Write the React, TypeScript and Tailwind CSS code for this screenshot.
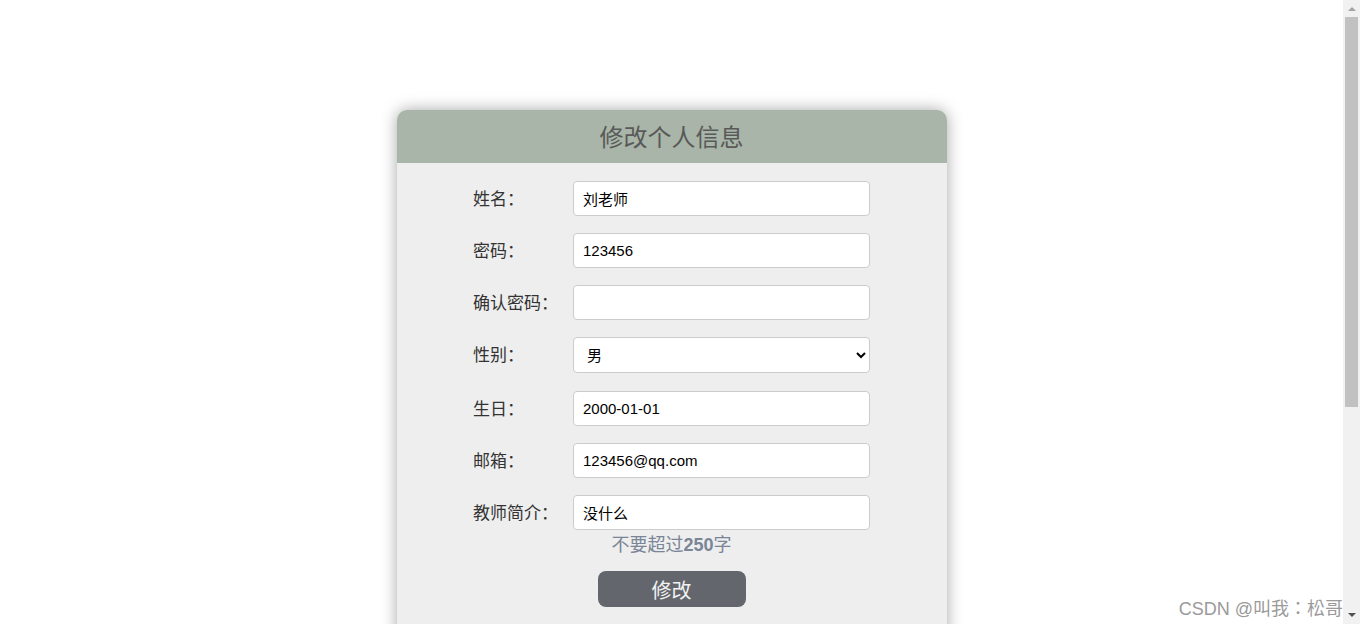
import { useState } from "react";

const font = "font-['Liberation_Sans','Noto_Sans_CJK_SC',sans-serif]";

const fields = [
  { label: "姓名：", value: "刘老师", type: "text" },
  { label: "密码：", value: "123456", type: "text" },
  { label: "确认密码：", value: "", type: "password" },
];

const fields2 = [
  { label: "生日：", value: "2000-01-01" },
  { label: "邮箱：", value: "123456@qq.com" },
  { label: "教师简介：", value: "没什么" },
];

const Row = ({ label, children }: { label: string; children: React.ReactNode }) => (
  <div className="flex items-center w-[397px] mx-auto">
    <label className="w-[100px] shrink-0 text-[17px] text-[#333] pt-[2px]">{label}</label>
    {children}
  </div>
);

const inputCls =
  "w-[297px] h-[35px] bg-white border border-[#cccccc] rounded-[4px] px-[9px] text-[15px] text-black outline-none";

export default function App() {
  const [gender, setGender] = useState("男");

  return (
    <div className={`h-[624px] flex overflow-hidden bg-white ${font}`}>
      {/* PAGE */}
      <div className="flex-1 relative overflow-hidden pt-[110px]">
        <div className="w-[550px] mx-auto rounded-t-[10px] overflow-hidden shadow-[0_0_16px_rgba(0,0,0,0.35)] bg-[#eeeeee] pb-[40px]">
          <div className="h-[53px] bg-[#a8b5a8] flex items-center justify-center">
            <h1 className="text-[24px] text-[#595959] pt-[3px]">修改个人信息</h1>
          </div>

          <div className="pt-[18px] flex flex-col">
            <div className="flex flex-col gap-[17px]">
              {fields.map((f) => (
                <Row key={f.label} label={f.label}>
                  <input className={inputCls} type={f.type} defaultValue={f.value} />
                </Row>
              ))}
              <Row label="性别：">
                <select
                  className="w-[297px] h-[36px] bg-white border border-[#cccccc] rounded-[4px] px-[9px] text-[15px] text-black outline-none"
                  value={gender}
                  onChange={(e) => setGender(e.target.value)}
                >
                  <option>男</option>
                  <option>女</option>
                </select>
              </Row>
            </div>

            <div className="flex flex-col gap-[17px] mt-[18px]">
              {fields2.map((f) => (
                <Row key={f.label} label={f.label}>
                  <input className={inputCls} type="text" defaultValue={f.value} />
                </Row>
              ))}
            </div>

            <p className="text-center text-[18px] text-[#7a8597] mt-[3px] leading-[24px]">
              不要超过<span className="font-bold">250</span>字
            </p>

            <div className="flex justify-center mt-[14px]">
              <button className="w-[148px] h-[36px] rounded-[8px] bg-[#63676d] text-[20px] text-[#f2f2f2] pt-[3px] cursor-pointer">
                修改
              </button>
            </div>
          </div>
        </div>

        {/* WATERMARK */}
        <div className="absolute right-0 bottom-[6px] text-[18px] text-[#9a9a9a] leading-none font-['Liberation_Sans','Noto_Sans_CJK_TC',sans-serif] [text-shadow:0_0_2px_#fff]">
          CSDN @叫我：松哥
        </div>
      </div>

      {/* SCROLLBAR */}
      <div className="w-[17px] h-full bg-[#f1f1f1] flex flex-col items-center">
        <div className="h-[17px] flex items-center justify-center">
          <svg width="8" height="5" viewBox="0 0 8 5">
            <path d="M0 5 L4 1 L8 5 Z" fill="#a3a3a3" />
          </svg>
        </div>
        <div className="w-[13px] h-[390px] bg-[#c1c1c1]" />
        <div className="flex-1" />
        <div className="h-[17px] flex items-center justify-center">
          <svg width="8" height="5" viewBox="0 0 8 5">
            <path d="M0 0 L4 4 L8 0 Z" fill="#505050" />
          </svg>
        </div>
      </div>
    </div>
  );
}
